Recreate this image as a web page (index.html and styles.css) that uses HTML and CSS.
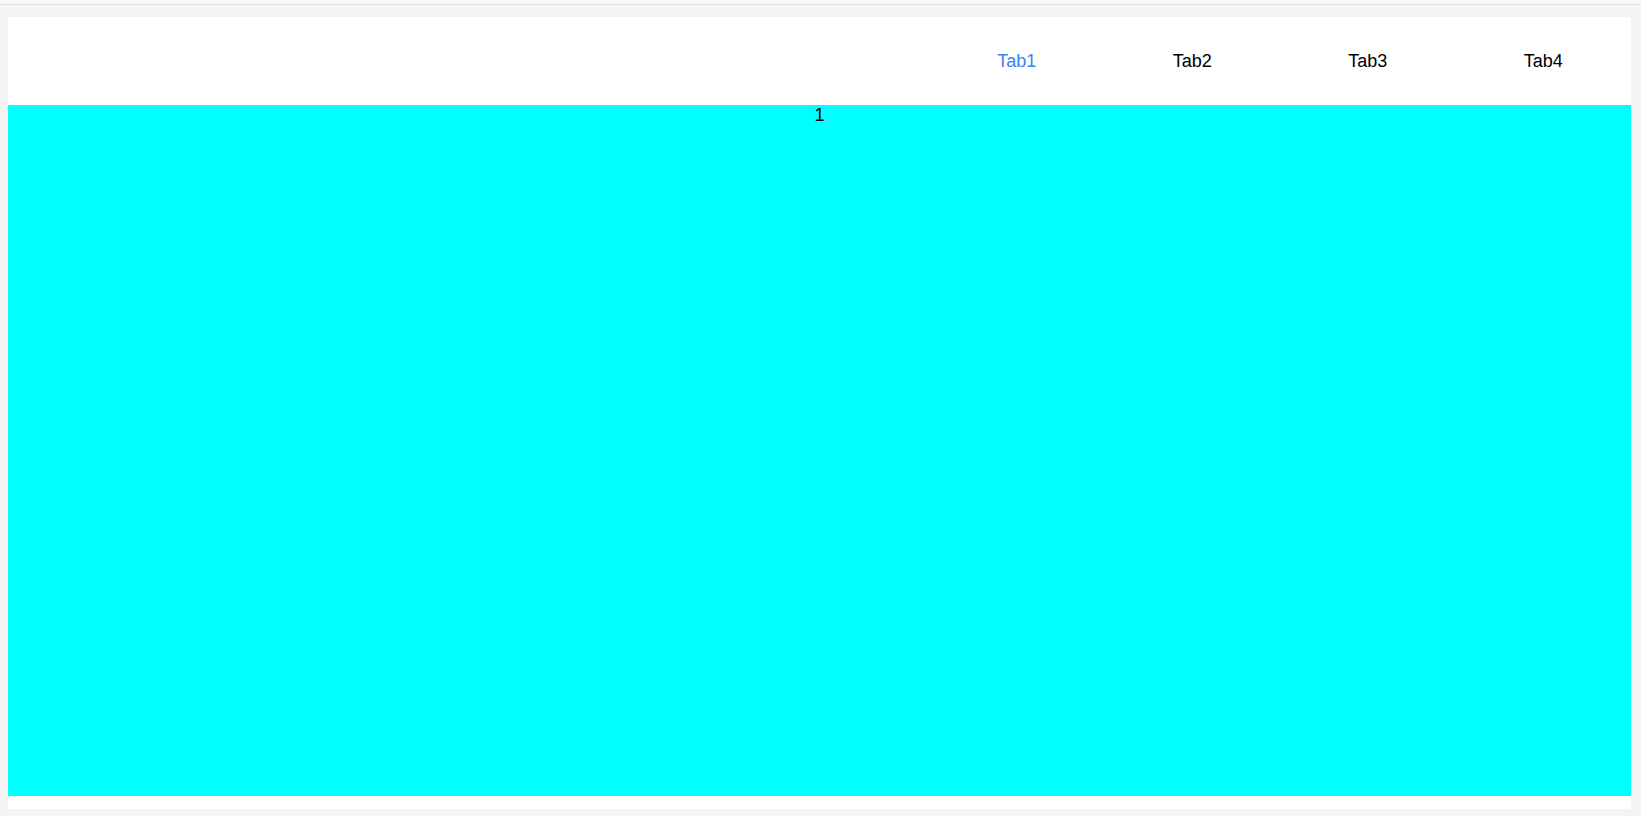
FILE: index.html
```html
<!DOCTYPE html>
<html>
<head>
<meta charset="utf-8">
<link rel="stylesheet" href="styles.css">
</head>
<body>
<div class="topline"></div>
<div class="wrap">
  <div class="card">
    <div class="header">
      <div class="spacer"></div>
      <nav class="tabs">
        <div class="tab active">Tab1</div>
        <div class="tab">Tab2</div>
        <div class="tab">Tab3</div>
        <div class="tab">Tab4</div>
      </nav>
    </div>
    <div class="content">1</div>
  </div>
</div>
</body>
</html>
```
FILE: styles.css
```css
html, body {
  margin: 0;
  padding: 0;
  background: #f4f4f4;
  font-family: "Liberation Sans", Arial, sans-serif;
  height: 816px;
  overflow: hidden;
}
.topline {
  height: 4px;
  background: #f8f8f8;
  border-bottom: 1px solid #dcdcdc;
}
.wrap {
  padding: 12px 10px 7px 8px;
}
.card {
  background: #ffffff;
  height: 792px;
  display: flex;
  flex-direction: column;
}
.header {
  height: 88px;
  display: flex;
  align-items: center;
}
.spacer {
  flex: 1;
}
.tabs {
  width: 702px;
  display: flex;
}
.tab {
  flex: 1;
  text-align: center;
  font-size: 18px;
  color: #000;
}
.tab.active {
  color: #3b82f6;
}
.content {
  height: 691px;
  background: #00ffff;
  text-align: center;
  font-size: 18px;
  color: #000;
}
```
